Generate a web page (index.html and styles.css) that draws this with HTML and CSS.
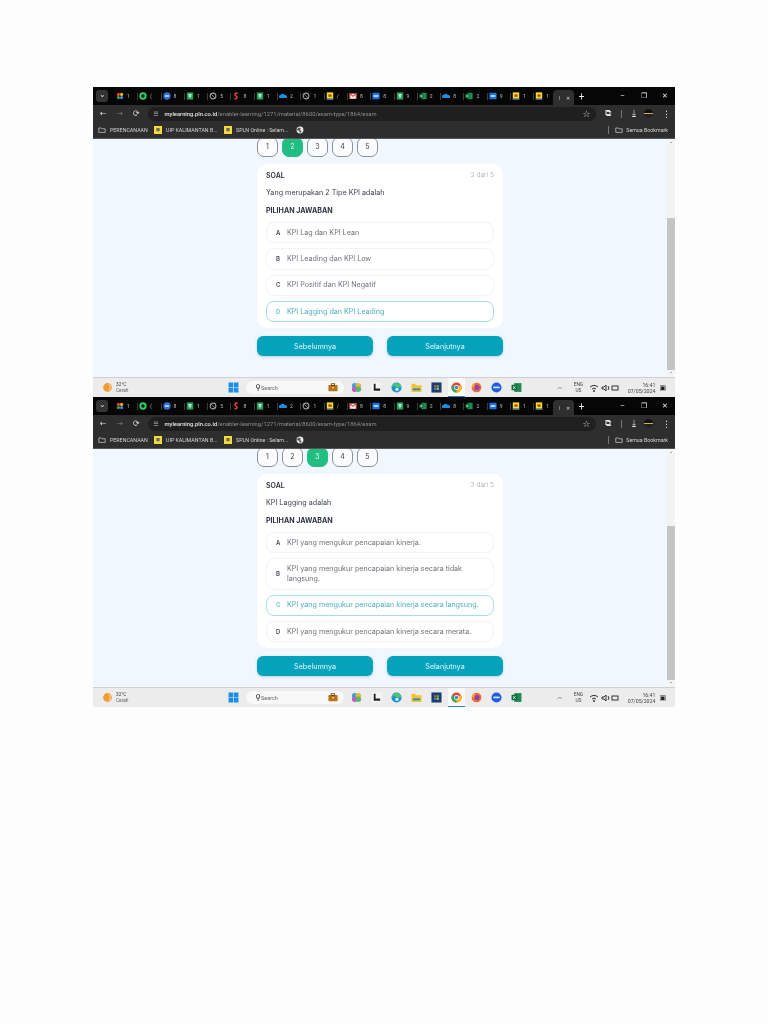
FILE: index.html
```html
<!DOCTYPE html>
<html lang="en">
<head>
    <meta charset="UTF-8">
    <title>Soal KPI</title>
    <link rel="stylesheet" href="styles.css">
</head>
<body>
    <svg class="defs" width="0" height="0">
        <symbol id="i-multi" viewBox="0 0 10 10"><circle cx="3" cy="3" r="2" fill="#e8453c"/><circle cx="7" cy="3" r="2" fill="#f5b400"/><circle cx="3" cy="7" r="2" fill="#34a853"/><circle cx="7" cy="7" r="2" fill="#4285f4"/></symbol>
        <symbol id="i-wa" viewBox="0 0 10 10"><circle cx="5" cy="5" r="4.6" fill="#25d366"/><circle cx="5" cy="5" r="2.2" fill="#0c0c0c"/></symbol>
        <symbol id="i-blue" viewBox="0 0 10 10"><circle cx="5" cy="5" r="4.6" fill="#2a6fdb"/><rect x="2.5" y="4" width="5" height="2" fill="#cfe0ff"/></symbol>
        <symbol id="i-sheet" viewBox="0 0 10 10"><rect x="1" y="0.5" width="8" height="9" fill="#1f9d55"/><path d="M3 3h4M3 5h4M5 3v5" stroke="#fff" stroke-width="1"/></symbol>
        <symbol id="i-ring" viewBox="0 0 10 10"><circle cx="5" cy="5" r="3.6" fill="none" stroke="#9a9a9a" stroke-width="1.4"/><path d="M2 2l6 6" stroke="#9a9a9a"/></symbol>
        <symbol id="i-red" viewBox="0 0 10 10"><path d="M7 1.5C4 .5 2.500 3 5 5s1 4-2 3.500" fill="none" stroke="#e8453c" stroke-width="1.800"/></symbol>
        <symbol id="i-cloud" viewBox="0 0 10 10"><path d="M1 7.500a2 2 0 0 1 1-3.800 3 3 0 0 1 5.500.3A1.800 1.800 0 0 1 9 7.500z" fill="#1a8fe3"/></symbol>
        <symbol id="i-yellow" viewBox="0 0 10 10"><rect x="1" y="0.500" width="8" height="9" fill="#f3e21a"/><rect x="3" y="3" width="4" height="3" fill="#b23a48"/><rect x="1" y="8" width="8" height="1.500" fill="#2a5fb0"/></symbol>
        <symbol id="i-gmail" viewBox="0 0 10 10"><rect x="1" y="2" width="8" height="6.500" fill="#f4f4f4"/><path d="M1 8.500V2l4 3.500L9 2v6.500" fill="none" stroke="#d93f33" stroke-width="1.300"/></symbol>
        <symbol id="i-cal" viewBox="0 0 10 10"><rect x="0.500" y="1" width="9" height="8" rx="1" fill="#1a73e8"/><rect x="2" y="4" width="6" height="2" fill="#dbe8ff"/></symbol>
        <symbol id="i-excel" viewBox="0 0 10 10"><rect x="3" y="1" width="6.500" height="8" fill="#1f8a50"/><rect x="0.500" y="2.500" width="5" height="5" fill="#0e6b3a"/><path d="M2 3.800l2 2.500M4 3.800l-2 2.500" stroke="#fff" stroke-width=".7"/></symbol>
        <symbol id="i-folder" viewBox="0 0 10 10"><path d="M1 2.500h3l1 1h4v4.500H1z" fill="none" stroke="#d0d0d0" stroke-width=".9"/></symbol>
        <symbol id="i-pln" viewBox="0 0 10 10"><rect width="10" height="10" fill="#f7dc2e"/><rect x="3" y="2.500" width="4" height="4" fill="#3a6cb0"/><path d="M5 2.500l-1 2h2l-1 2" stroke="#d0403a" stroke-width=".7" fill="none"/></symbol>
        <symbol id="i-globe" viewBox="0 0 10 10"><circle cx="5" cy="5" r="4.300" fill="#e6e6e6"/><path d="M3 2l3 1-1 2 2 2-2 2-1-3-3-1z" fill="#555"/></symbol>
        <symbol id="i-win" viewBox="0 0 10 10"><path d="M.5.500h4.200v4.200H.5zM5.300.500h4.200v4.200H5.300zM.5 5.300h4.200v4.200H.5zM5.300 5.300h4.200v4.200H5.300z" fill="#1b8fe8"/></symbol>
        <symbol id="i-sun" viewBox="0 0 12 12"><circle cx="6" cy="6" r="4.800" fill="#f29a2e"/><path d="M6 2.500a3.500 3.500 0 0 1 0 7H3.500A3.500 3.500 0 0 0 6 2.500z" fill="#fbe3bd"/></symbol>
        <symbol id="i-case" viewBox="0 0 12 10"><rect x="0.500" y="2" width="11" height="7.500" rx="1" fill="#b8741c"/><rect x="4" y="0.500" width="4" height="2" fill="none" stroke="#6b4310"/><rect x="5" y="4.500" width="2" height="1.500" fill="#ffe08a"/></symbol>
        <symbol id="i-copilot" viewBox="0 0 12 12"><circle cx="4" cy="4" r="3" fill="#2fa8e0"/><circle cx="8" cy="4" r="3" fill="#e8b53a"/><circle cx="4" cy="8" r="3" fill="#c457c9"/><circle cx="8" cy="8" r="3" fill="#55b96b"/></symbol>
        <symbol id="i-black" viewBox="0 0 12 12"><rect x="0.500" y="0.500" width="11" height="11" fill="#f5f5f5"/><path d="M3 2v7.500h7V7H5V2z" fill="#222"/></symbol>
        <symbol id="i-edge" viewBox="0 0 12 12"><circle cx="6" cy="6" r="5.500" fill="#1a8fd8"/><path d="M1 6a5 5 0 0 1 10 0H6a3 3 0 0 0-5 0z" fill="#4bc76a"/><circle cx="6.500" cy="8" r="1.800" fill="#d8f2ff"/></symbol>
        <symbol id="i-files" viewBox="0 0 12 12"><path d="M.5 2h4l1 1.500h6V11H.5z" fill="#f4c430"/><rect x="2" y="7" width="8" height="2" fill="#2a87d0"/></symbol>
        <symbol id="i-store" viewBox="0 0 12 12"><rect x="0.500" y="0.500" width="11" height="11" fill="#1a3f6e"/><path d="M3.500 3.500h2.200v2.200H3.500z" fill="#e8553c"/><path d="M6.300 3.500h2.200v2.200H6.300z" fill="#6abf4b"/><path d="M3.500 6.300h2.200v2.200H3.500z" fill="#2a9fe0"/><path d="M6.300 6.300h2.200v2.200H6.300z" fill="#f5c02e"/></symbol>
        <symbol id="i-chrome" viewBox="0 0 12 12"><circle cx="6" cy="6" r="5.500" fill="#ea4335"/><path d="M6 6L1.200 3.300A5.500 5.500 0 0 0 6 11.500z" fill="#34a853"/><path d="M6 6v5.500A5.500 5.500 0 0 0 10.800 3.300z" fill="#fbbc05"/><circle cx="6" cy="6" r="2.700" fill="#fff"/><circle cx="6" cy="6" r="2" fill="#4285f4"/></symbol>
        <symbol id="i-fox" viewBox="0 0 12 12"><circle cx="6" cy="6" r="5.300" fill="#ef6a2e"/><circle cx="6.500" cy="6" r="2.800" fill="#8a3fc4"/><path d="M1 5a5 5 0 0 1 4-4C3 3 3 5 4 7z" fill="#f7b32b"/></symbol>
        <symbol id="i-zoom" viewBox="0 0 12 12"><circle cx="6" cy="6" r="5.500" fill="#1d5fe0"/><rect x="2.500" y="5" width="7" height="1.800" fill="#dce8ff"/></symbol>
    </svg>

    <section class="shot">
        <div class="tabstrip">
            <span class="tab-search">⌄</span>
            <span class="tab"><svg class="ti"><use href="#i-multi"/></svg>1</span>
            <span class="tab"><svg class="ti"><use href="#i-wa"/></svg>(</span>
            <span class="tab"><svg class="ti"><use href="#i-blue"/></svg>8</span>
            <span class="tab"><svg class="ti"><use href="#i-sheet"/></svg>1</span>
            <span class="tab"><svg class="ti"><use href="#i-ring"/></svg>5</span>
            <span class="tab"><svg class="ti"><use href="#i-red"/></svg>8</span>
            <span class="tab"><svg class="ti"><use href="#i-sheet"/></svg>1</span>
            <span class="tab"><svg class="ti"><use href="#i-cloud"/></svg>2</span>
            <span class="tab"><svg class="ti"><use href="#i-ring"/></svg>1</span>
            <span class="tab"><svg class="ti"><use href="#i-yellow"/></svg>/</span>
            <span class="tab"><svg class="ti"><use href="#i-gmail"/></svg>8</span>
            <span class="tab"><svg class="ti"><use href="#i-cal"/></svg>8</span>
            <span class="tab"><svg class="ti"><use href="#i-sheet"/></svg>9</span>
            <span class="tab"><svg class="ti"><use href="#i-excel"/></svg>2</span>
            <span class="tab"><svg class="ti"><use href="#i-cloud"/></svg>8</span>
            <span class="tab"><svg class="ti"><use href="#i-excel"/></svg>2</span>
            <span class="tab"><svg class="ti"><use href="#i-cal"/></svg>9</span>
            <span class="tab"><svg class="ti"><use href="#i-yellow"/></svg>1</span>
            <span class="tab"><svg class="ti"><use href="#i-yellow"/></svg>1</span>
            <span class="tab-active">I<b>✕</b></span>
            <span class="tab-new">+</span>
            <span class="winctl"><span>–</span><span>❐</span><span>✕</span></span>
        </div>
        <div class="toolbar">
            <span class="nav">←</span><span class="nav dim">→</span><span class="nav">⟳</span>
            <div class="omnibox">
                <span class="tune">☰</span>
                <span class="url"><b>mylearning.pln.co.id</b>/enabler-learning/1271/material/8600/exam-type/1864/exam</span>
                <span class="star">☆</span>
            </div>
            <span class="tool ext">⧉</span><span class="tool-sep"></span><span class="tool dl">⤓</span><span class="avatar"></span><span class="tool more">⋮</span>
        </div>
        <div class="bookmarks">
            <svg class="bi"><use href="#i-folder"/></svg><span class="bm w-a">PERENCANAAN</span>
            <svg class="bi"><use href="#i-pln"/></svg><span class="bm w-b">UIP KALIMANTAN B...</span>
            <svg class="bi"><use href="#i-pln"/></svg><span class="bm w-c">SPLN Online : Selam...</span>
            <svg class="bi"><use href="#i-globe"/></svg>
            <span class="bm-right"><span class="tool-sep"></span><svg class="bi"><use href="#i-folder"/></svg><span class="bm">Semua Bookmark</span></span>
        </div>
        <div class="viewport">
            <main class="page">
                <div class="pager">
                    <span class="num">1</span><span class="num on">2</span><span class="num">3</span><span class="num">4</span><span class="num">5</span>
                </div>
                <div class="card">
                    <div class="card-head"><strong>SOAL</strong><span>2 dari 5</span></div>
                    <p class="question">Yang merupakan 2 Tipe KPI adalah</p>
                    <h4>PILIHAN JAWABAN</h4>
                    <div class="options">
                        <div class="opt"><b>A</b><span>KPI Lag dan KPI Lean</span></div>
                        <div class="opt"><b>B</b><span>KPI Leading dan KPI Low</span></div>
                        <div class="opt"><b>C</b><span>KPI Positif dan KPI Negatif</span></div>
                        <div class="opt picked"><b>D</b><span>KPI Lagging dan KPI Leading</span></div>
                    </div>
                </div>
                <div class="actions"><button>Sebelumnya</button><button>Selanjutnya</button></div>
            </main>
            <div class="scrollbar"><i class="up"></i><i class="track first"></i><i class="thumb"></i><i class="down"></i></div>
        </div>
        <div class="taskbar">
            <svg class="sun"><use href="#i-sun"/></svg>
            <span class="weather">32°C<br><em>Cerah</em></span>
            <svg class="tk win"><use href="#i-win"/></svg>
            <span class="searchbox"><span class="lens">⚲</span>Search<svg class="case"><use href="#i-case"/></svg></span>
            <svg class="tk"><use href="#i-copilot"/></svg>
            <svg class="tk"><use href="#i-black"/></svg>
            <svg class="tk"><use href="#i-edge"/></svg>
            <svg class="tk"><use href="#i-files"/></svg>
            <svg class="tk"><use href="#i-store"/></svg>
            <span class="tk-on"><svg class="tk"><use href="#i-chrome"/></svg></span>
            <svg class="tk"><use href="#i-fox"/></svg>
            <svg class="tk"><use href="#i-zoom"/></svg>
            <svg class="tk"><use href="#i-excel"/></svg>
            <span class="tray">
                <span class="caret">︿</span>
                <span class="lang">ENG<br>US</span>
                <svg class="tray-ic" viewBox="0 0 30 10"><path d="M1 4a6 6 0 0 1 8 0M3 6a3 3 0 0 1 4 0" fill="none" stroke="#333"/><circle cx="5" cy="8" r="1" fill="#333"/><path d="M13 4h2l2-2v6l-2-2h-2zM19 3a3 3 0 0 1 0 4" fill="none" stroke="#333"/><rect x="23" y="3" width="6" height="4" fill="none" stroke="#333"/></svg>
                <span class="clock">16:41<br>07/05/2024</span>
                <span class="bell">▣</span>
            </span>
        </div>
    </section>

    <section class="shot">
        <div class="tabstrip">
            <span class="tab-search">⌄</span>
            <span class="tab"><svg class="ti"><use href="#i-multi"/></svg>1</span>
            <span class="tab"><svg class="ti"><use href="#i-wa"/></svg>(</span>
            <span class="tab"><svg class="ti"><use href="#i-blue"/></svg>8</span>
            <span class="tab"><svg class="ti"><use href="#i-sheet"/></svg>1</span>
            <span class="tab"><svg class="ti"><use href="#i-ring"/></svg>5</span>
            <span class="tab"><svg class="ti"><use href="#i-red"/></svg>8</span>
            <span class="tab"><svg class="ti"><use href="#i-sheet"/></svg>1</span>
            <span class="tab"><svg class="ti"><use href="#i-cloud"/></svg>2</span>
            <span class="tab"><svg class="ti"><use href="#i-ring"/></svg>1</span>
            <span class="tab"><svg class="ti"><use href="#i-yellow"/></svg>/</span>
            <span class="tab"><svg class="ti"><use href="#i-gmail"/></svg>8</span>
            <span class="tab"><svg class="ti"><use href="#i-cal"/></svg>8</span>
            <span class="tab"><svg class="ti"><use href="#i-sheet"/></svg>9</span>
            <span class="tab"><svg class="ti"><use href="#i-excel"/></svg>2</span>
            <span class="tab"><svg class="ti"><use href="#i-cloud"/></svg>8</span>
            <span class="tab"><svg class="ti"><use href="#i-excel"/></svg>2</span>
            <span class="tab"><svg class="ti"><use href="#i-cal"/></svg>9</span>
            <span class="tab"><svg class="ti"><use href="#i-yellow"/></svg>1</span>
            <span class="tab"><svg class="ti"><use href="#i-yellow"/></svg>1</span>
            <span class="tab-active">I<b>✕</b></span>
            <span class="tab-new">+</span>
            <span class="winctl"><span>–</span><span>❐</span><span>✕</span></span>
        </div>
        <div class="toolbar">
            <span class="nav">←</span><span class="nav dim">→</span><span class="nav">⟳</span>
            <div class="omnibox">
                <span class="tune">☰</span>
                <span class="url"><b>mylearning.pln.co.id</b>/enabler-learning/1271/material/8600/exam-type/1864/exam</span>
                <span class="star">☆</span>
            </div>
            <span class="tool ext">⧉</span><span class="tool-sep"></span><span class="tool dl">⤓</span><span class="avatar"></span><span class="tool more">⋮</span>
        </div>
        <div class="bookmarks">
            <svg class="bi"><use href="#i-folder"/></svg><span class="bm w-a">PERENCANAAN</span>
            <svg class="bi"><use href="#i-pln"/></svg><span class="bm w-b">UIP KALIMANTAN B...</span>
            <svg class="bi"><use href="#i-pln"/></svg><span class="bm w-c">SPLN Online : Selam...</span>
            <svg class="bi"><use href="#i-globe"/></svg>
            <span class="bm-right"><span class="tool-sep"></span><svg class="bi"><use href="#i-folder"/></svg><span class="bm">Semua Bookmark</span></span>
        </div>
        <div class="viewport">
            <main class="page">
                <div class="pager">
                    <span class="num">1</span><span class="num">2</span><span class="num on">3</span><span class="num">4</span><span class="num">5</span>
                </div>
                <div class="card">
                    <div class="card-head"><strong>SOAL</strong><span>3 dari 5</span></div>
                    <p class="question">KPI Lagging adalah</p>
                    <h4>PILIHAN JAWABAN</h4>
                    <div class="options">
                        <div class="opt"><b>A</b><span>KPI yang mengukur pencapaian kinerja.</span></div>
                        <div class="opt tall"><b>B</b><span>KPI yang mengukur pencapaian kinerja secara tidak langsung.</span></div>
                        <div class="opt picked"><b>C</b><span>KPI yang mengukur pencapaian kinerja secara langsung.</span></div>
                        <div class="opt"><b>D</b><span>KPI yang mengukur pencapaian kinerja secara merata.</span></div>
                    </div>
                </div>
                <div class="actions"><button>Sebelumnya</button><button>Selanjutnya</button></div>
            </main>
            <div class="scrollbar"><i class="up"></i><i class="track second"></i><i class="thumb"></i><i class="down"></i></div>
        </div>
        <div class="taskbar">
            <svg class="sun"><use href="#i-sun"/></svg>
            <span class="weather">32°C<br><em>Cerah</em></span>
            <svg class="tk win"><use href="#i-win"/></svg>
            <span class="searchbox"><span class="lens">⚲</span>Search<svg class="case"><use href="#i-case"/></svg></span>
            <svg class="tk"><use href="#i-copilot"/></svg>
            <svg class="tk"><use href="#i-black"/></svg>
            <svg class="tk"><use href="#i-edge"/></svg>
            <svg class="tk"><use href="#i-files"/></svg>
            <svg class="tk"><use href="#i-store"/></svg>
            <span class="tk-on"><svg class="tk"><use href="#i-chrome"/></svg></span>
            <svg class="tk"><use href="#i-fox"/></svg>
            <svg class="tk"><use href="#i-zoom"/></svg>
            <svg class="tk"><use href="#i-excel"/></svg>
            <span class="tray">
                <span class="caret">︿</span>
                <span class="lang">ENG<br>US</span>
                <svg class="tray-ic" viewBox="0 0 30 10"><path d="M1 4a6 6 0 0 1 8 0M3 6a3 3 0 0 1 4 0" fill="none" stroke="#333"/><circle cx="5" cy="8" r="1" fill="#333"/><path d="M13 4h2l2-2v6l-2-2h-2zM19 3a3 3 0 0 1 0 4" fill="none" stroke="#333"/><rect x="23" y="3" width="6" height="4" fill="none" stroke="#333"/></svg>
                <span class="clock">16:41<br>07/05/2024</span>
                <span class="bell">▣</span>
            </span>
        </div>
    </section>
</body>
</html>
```

FILE: styles.css
```css
html, body {
    margin: 0;
    background: #fdfdfd;
}
body {
    height: 1024px;
    padding: 87px 93px 0;
    box-sizing: border-box;
    overflow: hidden;
    font-family: Inter, "Noto Sans", sans-serif;
}
.defs {
    display: block;
    height: 0;
}
.shot {
    width: 582px;
    height: 310px;
    display: flex;
    flex-direction: column;
    overflow: hidden;
    filter: blur(0.3px);
}

/* browser chrome */
.tabstrip {
    height: 18px;
    background: #060606;
    display: flex;
    align-items: center;
    color: #bbb;
    font: 5px Roboto, sans-serif;
    flex: none;
}
.tab-search {
    width: 12px;
    height: 12px;
    margin: 0 7px 0 3px;
    border-radius: 3px;
    background: #333;
    color: #ddd;
    text-align: center;
    font-size: 8px;
    line-height: 10px;
    flex: none;
}
.tab {
    width: 23.3px;
    box-sizing: border-box;
    padding-left: 1px;
    display: flex;
    align-items: center;
    gap: 3px;
    flex: none;
    border-right: 1px solid #3c3c3c;
    height: 7px;
}
.ti {
    width: 8px;
    height: 8px;
}
.tab-active {
    width: 21px;
    height: 15px;
    margin: 3px 0 0 -5px;
    padding: 0 4px 0 6px;
    box-sizing: border-box;
    background: #2f2f2f;
    border-radius: 4px 4px 0 0;
    display: flex;
    justify-content: space-between;
    align-items: center;
    flex: none;
}
.tab-active b {
    font-weight: 400;
    color: #ddd;
}
.tab-new {
    margin-left: 5px;
    color: #eee;
    font-size: 10px;
}
.winctl {
    margin-left: auto;
    display: flex;
    color: #eee;
    font-size: 7px;
}
.winctl span {
    width: 21px;
    text-align: center;
}
.toolbar {
    height: 17px;
    background: #2e2e2e;
    display: flex;
    align-items: center;
    padding-left: 2px;
    color: #ddd;
    flex: none;
}
.nav {
    width: 16.500px;
    text-align: center;
    font: 8px "DejaVu Sans", sans-serif;
}
.nav.dim {
    color: #777;
}
.omnibox {
    width: 448px;
    height: 14px;
    margin-left: 3px;
    border-radius: 7px;
    background: #1f1f1f;
    display: flex;
    align-items: center;
    flex: none;
}
.tune {
    width: 17px;
    text-align: center;
    color: #ccc;
    font: 6px "DejaVu Sans", sans-serif;
}
.url {
    font: 5.800px Roboto, sans-serif;
    color: #8d8d8d;
}
.url b {
    font-weight: 500;
    color: #e4e4e4;
}
.star {
    margin-left: auto;
    margin-right: 5px;
    font: 9px "DejaVu Sans", sans-serif;
    color: #ddd;
}
.tool {
    font: 9px "DejaVu Sans", sans-serif;
    text-align: center;
}
.ext {
    width: 14px;
    margin-left: 5px;
}
.tool-sep {
    width: 1px;
    height: 8px;
    margin: 0 6px;
    background: #777;
    flex: none;
}
.dl {
    width: 12px;
}
.avatar {
    width: 9px;
    height: 9px;
    margin-left: 4px;
    border-radius: 50%;
    background: linear-gradient(#111 45%, #c9b64a 45%, #c9b64a 55%, #222 55%);
    flex: none;
}
.more {
    width: 10px;
    margin-left: 9px;
}
.bookmarks {
    height: 17px;
    background: #2e2e2e;
    border-bottom: 1px solid #555;
    box-sizing: border-box;
    display: flex;
    align-items: center;
    padding-left: 5px;
    color: #d4d4d4;
    font: 5.300px Roboto, sans-serif;
    flex: none;
}
.bi {
    width: 8px;
    height: 8px;
    margin-right: 4px;
    flex: none;
}
.bm {
    white-space: nowrap;
}
.w-a {
    width: 44px;
}
.w-b {
    width: 58px;
}
.w-c {
    width: 60px;
}
.bm-right {
    margin-left: auto;
    margin-right: 7px;
    display: flex;
    align-items: center;
}
.bm-right .bi {
    margin-right: 3px;
}

/* exam page */
.viewport {
    height: 238px;
    background: #f0f7ff;
    display: flex;
    overflow: hidden;
    flex: none;
}
.page {
    width: 410px;
    margin-left: 164px;
    flex: none;
    color: #3d4450;
}
.pager {
    display: flex;
    gap: 4px;
    margin-top: -2px;
    margin-bottom: 7px;
}
.num {
    width: 21px;
    height: 20px;
    box-sizing: border-box;
    border: 1px solid #8b919a;
    border-radius: 7px;
    background: #fbfcfd;
    font-size: 7px;
    line-height: 18px;
    text-align: center;
}
.num.on {
    background: #22bd80;
    border-color: #22bd80;
    color: #e8fff6;
}
.card {
    width: 246px;
    box-sizing: border-box;
    padding: 6px 9px;
    background: #fff;
    border-radius: 10px;
}
.card-head {
    display: flex;
    justify-content: space-between;
    align-items: center;
    height: 10px;
    font-size: 6.500px;
}
.card-head strong {
    font-weight: 600;
    color: #2d3340;
    font-size: 7px;
}
.card-head span {
    color: #b5b9bf;
}
.question {
    margin: 8px 0 0;
    font-size: 7.200px;
    line-height: 10px;
}
h4 {
    margin: 8px 0 7px;
    font-size: 7.100px;
    line-height: 9px;
    font-weight: 700;
    color: #2d3340;
}
.options {
    display: flex;
    flex-direction: column;
    gap: 5px;
}
.opt {
    min-height: 21.300px;
    box-sizing: border-box;
    padding: 3px 9px;
    display: flex;
    align-items: center;
    border: 1px solid #f1f3f5;
    border-radius: 8px;
    font-size: 7.150px;
    line-height: 10px;
    color: #6d7278;
}
.opt b {
    width: 11px;
    flex: none;
    font-size: 6px;
    font-weight: 600;
    color: #444a52;
}
.opt.tall {
    min-height: 31.500px;
}
.opt.picked {
    border-color: #a5dfe3;
    color: #4aaebf;
}
.opt.picked b {
    color: #6cc0cf;
}
.actions {
    width: 246px;
    margin-top: 8px;
    display: flex;
    justify-content: space-between;
}
button {
    width: 116px;
    height: 20px;
    border: 0;
    border-radius: 6px;
    background: #05a3bb;
    color: #e4f7fa;
    font: 7.200px Inter, sans-serif;
    box-shadow: 0 1px 3px rgba(60, 120, 160, 0.3);
}
.scrollbar {
    width: 8px;
    margin-left: auto;
    background: #f3f3f3;
    display: flex;
    flex-direction: column;
}
.up, .down {
    height: 7px;
    flex: none;
    position: relative;
}
.up::after, .down::after {
    content: "";
    position: absolute;
    left: 2.500px;
    top: 2px;
    border: 1.500px solid transparent;
}
.up::after {
    border-bottom-color: #666;
}
.down::after {
    border-top-color: #666;
}
.track {
    flex: none;
}
.track.first {
    height: 72px;
}
.track.second {
    height: 70px;
}
.thumb {
    flex: 1;
    background: #c4c4c4;
}

/* windows taskbar */
.taskbar {
    height: 20px;
    background: #ececec;
    border-top: 1px solid #d0d0d0;
    box-sizing: border-box;
    display: flex;
    align-items: center;
    padding-left: 9px;
    color: #444;
    font: 4.800px/6px Roboto, sans-serif;
    flex: none;
}
.sun {
    width: 11px;
    height: 11px;
    margin-right: 3px;
    flex: none;
}
.weather {
    width: 112px;
    flex: none;
}
.weather em {
    font-style: normal;
    color: #666;
}
.tk {
    width: 11px;
    height: 11px;
    margin-right: 9px;
    flex: none;
}
.tk.win {
    margin-right: 7px;
}
.searchbox {
    width: 98px;
    height: 13px;
    margin-right: 7px;
    padding-left: 5px;
    box-sizing: border-box;
    border-radius: 7px;
    background: #f8f8f8;
    display: flex;
    align-items: center;
    color: #666;
    font-size: 5.500px;
    flex: none;
}
.lens {
    width: 10px;
    font: 8px "DejaVu Sans", sans-serif;
    color: #222;
    transform: scaleX(-1);
}
.case {
    width: 10px;
    height: 9px;
    margin-left: auto;
    margin-right: 6px;
}
.tk-on {
    width: 17px;
    height: 19px;
    margin: 0 6px 0 -3px;
    padding-left: 3px;
    box-sizing: border-box;
    background: #f8f8f8;
    border-bottom: 1.500px solid #2a7fd0;
    display: flex;
    align-items: center;
    flex: none;
}
.tk-on .tk {
    margin: 0;
}
.tray {
    margin-left: auto;
    margin-right: 9px;
    display: flex;
    align-items: center;
    text-align: center;
}
.caret {
    width: 10px;
    font: 6px "DejaVu Sans", sans-serif;
}
.lang {
    margin-left: 6px;
    width: 14px;
}
.tray-ic {
    width: 30px;
    height: 10px;
    margin-left: 4px;
}
.clock {
    margin-left: 2px;
    width: 34px;
    text-align: right;
    font-size: 5.200px;
}
.bell {
    margin-left: 4px;
    font: 7px "DejaVu Sans", sans-serif;
    color: #222;
}
```
